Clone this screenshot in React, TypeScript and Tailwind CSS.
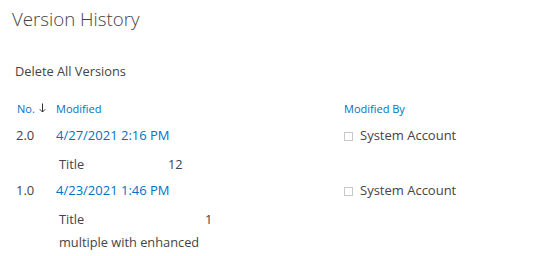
import React from "react";

const font = { fontFamily: '"Open Sans", "Noto Sans", sans-serif' };

type Field = { label: string; value: string };
type Version = { no: string; modified: string; by: string; fields: Field[]; labelW: string };

const versions: Version[] = [
  {
    no: "2.0",
    modified: "4/27/2021 2:16 PM",
    by: "System Account",
    fields: [{ label: "Title", value: "12" }],
    labelW: "w-[109px]",
  },
  {
    no: "1.0",
    modified: "4/23/2021 1:46 PM",
    by: "System Account",
    fields: [
      { label: "Title", value: "1" },
      { label: "multiple with enhanced", value: "" },
    ],
    labelW: "w-[146px]",
  },
];

function VersionRow({ v }: { v: Version }) {
  return (
    <div>
      <div className="flex items-center h-[28px] text-[13px]">
        <div className="w-[56px] shrink-0 pl-[16px] text-[#444]">{v.no}</div>
        <div className="w-[288px] shrink-0 text-[#0072c6]">{v.modified}</div>
        <div className="flex items-center gap-[7px] text-[#444]">
          <span className="w-[9px] h-[9px] border border-[#c8c8c8] bg-white" />
          {v.by}
        </div>
      </div>
      <div className="pl-[59px] pt-[3px] pb-[1px]">
        {v.fields.map((f) => (
          <div key={f.label} className="flex h-[23px] items-center text-[12.8px] text-[#444]">
            <div className={v.labelW}>{f.label}</div>
            <div>{f.value}</div>
          </div>
        ))}
      </div>
    </div>
  );
}

export default function App() {
  return (
    <div className="w-[548px] h-[256px] bg-white overflow-hidden" style={font}>
      <h1 className="pl-[12px] pt-[5px] text-[18.7px] font-light text-[#444] leading-[28px]">
        Version History
      </h1>
      <div className="pl-[15px] mt-[29px] text-[12.8px] text-[#444] leading-[18px]">
        Delete All Versions
      </div>
      <div className="flex items-center mt-[20px] h-[18px] text-[11px] text-[#0072c6]">
        <div className="w-[56px] shrink-0 pl-[17px] flex items-center">
          No.
          <svg className="ml-[4px] mb-[2px]" width="7" height="10" viewBox="0 0 7 10" fill="none" stroke="#333" strokeWidth="1">
            <path d="M3.5 0.5v8.5M0.8 6.3l2.7 2.7 2.7-2.7" />
          </svg>
        </div>
        <div className="w-[288px] shrink-0">Modified</div>
        <div>Modified By</div>
      </div>
      <div className="mt-[4px]">
        {versions.map((v) => (
          <VersionRow key={v.no} v={v} />
        ))}
      </div>
    </div>
  );
}
